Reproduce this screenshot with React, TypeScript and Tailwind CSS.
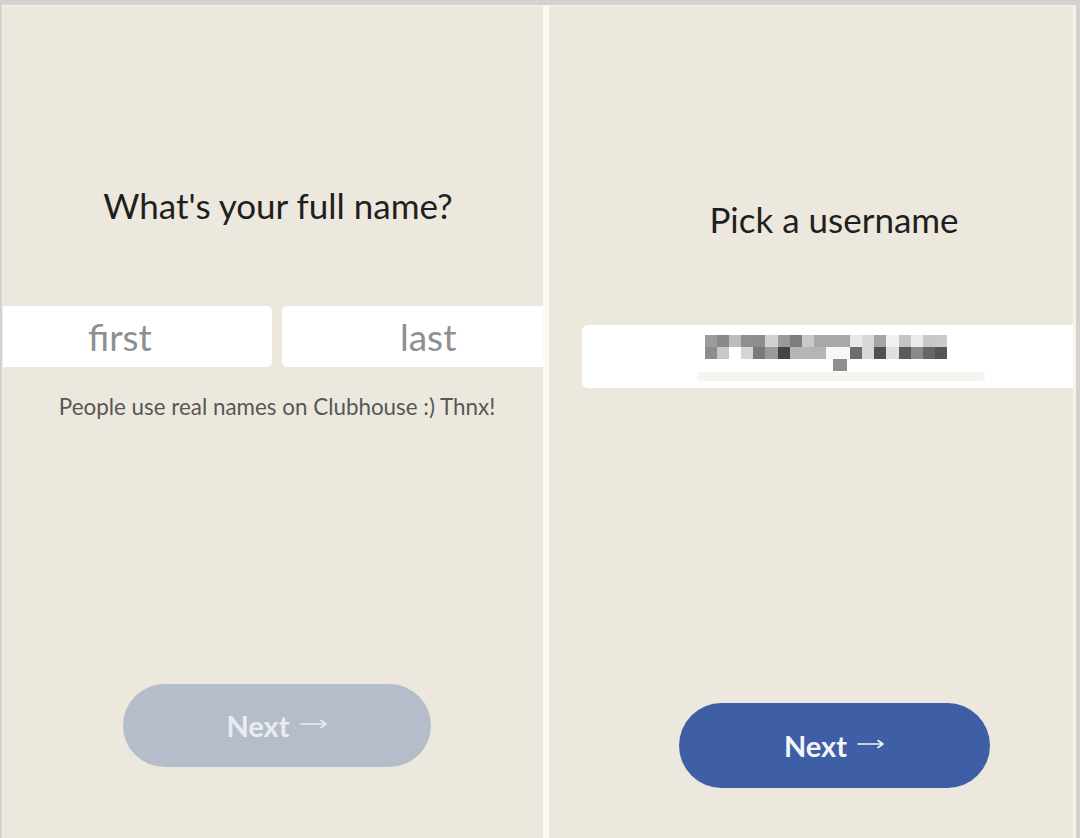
const blur: string[][] = [
  ['#9c9c9c', '#8a8a8a', '#bdbdbd', '#8f8f8f', '#8d8d8d', '#d0d0d0', '#9a9a9a', '#7d7d7d', '#c8c8c8', '#a8a8a8', '#a8a8a8', '#a8a8a8', '#e8e8e8', '#d8d8d8', '#a5a5a5', '#f0f0f0', '#c5c5c5', '#ececec', '#c8c8c8', '#cbcbcb'],
  ['#8d8d8d', '#c8c8c8', '#ffffff', '#d5d5d5', '#7a7a7a', '#9a9a9a', '#444444', '#b5b5b5', '#b5b5b5', '#b5b5b5', '#f7f7f7', '#f7f7f7', '#6d6d6d', '#d8d8d8', '#505050', '#e0e0e0', '#5a5a5a', '#8a8a8a', '#666666', '#555555'],
];

function NextButton({ active }: { active: boolean }) {
  return (
    <button
      className={
        active
          ? 'flex h-[85px] w-[311px] items-center justify-center rounded-full bg-[#3e5fa5] text-[29px] font-bold text-[#f3f5f9]'
          : 'flex h-[83px] w-[308px] items-center justify-center rounded-full bg-[#b5bdcb] text-[29px] font-bold text-[#e9ecf0]'
      }
    >
      <span>Next</span>
      <svg className="ml-[10px] mt-[-4px]" width="28" height="10" viewBox="0 0 28 10" fill="none" stroke="currentColor" strokeWidth="1.6" strokeLinecap="round" strokeLinejoin="round">
        <path d="M1 5h25M21 1.5L26 5l-5 3.5" />
      </svg>
    </button>
  );
}

export default function App() {
  return (
    <div className="flex h-[838px] w-[1080px] flex-col bg-[#d4d1d0] pl-[2px] pr-[4px] pt-[5px] font-['Lato',sans-serif]">
      <div className="flex flex-1 border-l border-t border-[#f4f1ea]">
        {/* left: full name */}
        <div className="flex w-[540px] flex-col bg-[#ede8dd]">
          <h1 className="pl-[10px] pt-[178px] text-center text-[35px] leading-[42px] text-[#1f1f1f]">
            What's your full name?
          </h1>
          <div className="mt-[80px] flex h-[61px] gap-[10px]">
            <div className="flex w-[269px] items-center rounded-r-[5px] bg-white pl-[85px] text-[37px] text-[#8f8f8f]">
              first
            </div>
            <div className="flex flex-1 items-center rounded-l-[5px] bg-white pl-[118px] text-[37px] text-[#8f8f8f]">
              last
            </div>
          </div>
          <p className="mt-[27px] pl-[8px] text-center text-[22.4px] leading-[26px] text-[#575757]">
            People use real names on Clubhouse :) Thnx!
          </p>
          <div className="ml-[120px] mt-[264px]">
            <NextButton active={false} />
          </div>
        </div>

        <div className="w-[6px] bg-[#fdf9f0]" />

        {/* right: username */}
        <div className="flex flex-1 flex-col border-r-[3px] border-[#f7f3e8] bg-[#ede8dd]">
          <h1 className="pl-[46px] pt-[192px] text-center text-[35px] leading-[42px] text-[#1f1f1f]">
            Pick a username
          </h1>
          <div className="ml-[33px] mt-[85px] h-[63px] rounded-l-[6px] bg-white pl-[123px] pt-[10px]">
            <div className="flex w-[242px] flex-col">
              {blur.map((row, i) => (
                <div key={i} className="flex">
                  {row.map((c, j) => (
                    <div key={j} className="h-[12px] w-[12.1px]" style={{ backgroundColor: c }} />
                  ))}
                </div>
              ))}
              <div className="ml-[128px] h-[12px] w-[14px] bg-[#8e8e8e]" />
            </div>
            <div className="-ml-[8px] mt-[1px] h-[9px] w-[288px] rounded-sm bg-[#f5f4ef]" />
          </div>
          <div className="ml-[130px] mt-[315px]">
            <NextButton active />
          </div>
        </div>
      </div>
    </div>
  );
}
